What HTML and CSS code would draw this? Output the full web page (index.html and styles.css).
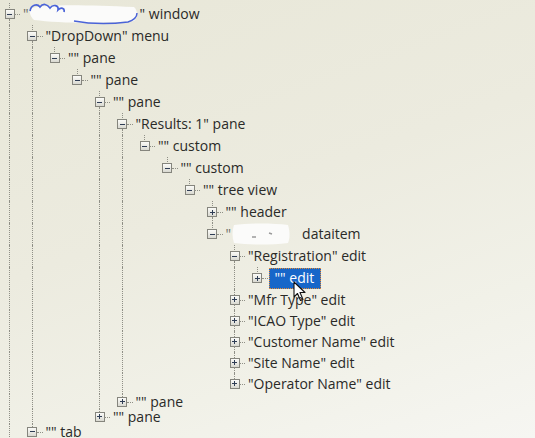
FILE: index.html
```html
<!DOCTYPE html>
<html lang="en">
<head>
<meta charset="utf-8">
<title>Tree</title>
<link rel="stylesheet" href="styles.css">
</head>
<body>
<div class="tree">
  <div class="row">
    <span class="n more"><i class="box minus"></i></span>
    <span class="label"><span class="q">"</span><svg class="redact r1" width="112" height="22" viewBox="0 0 112 22"><path d="M4 5 C20 1 60 2 106 4 C110 8 110 14 106 18 C70 21 30 20 6 17 C1 12 1 8 4 5 Z" fill="#fbfbfa"/><path d="M2 8 C3 2 9 0 12 4 C15 0 19 1 22 5 C25 1 31 2 30 7 C33 4 37 5 36 9" fill="none" stroke="#4a63d8" stroke-width="1.7"/><path d="M46 18 C62 21 84 21 100 19 C106 17 109 14 109 10" fill="none" stroke="#4a63d8" stroke-width="1.5"/></svg>" window</span>
  </div>
  <div class="row">
    <span class="g v"></span>
    <span class="n more"><i class="box minus"></i></span>
    <span class="label">"DropDown" menu</span>
  </div>
  <div class="row">
    <span class="g v"></span><span class="g v"></span>
    <span class="n"><i class="box minus"></i></span>
    <span class="label">"" pane</span>
  </div>
  <div class="row">
    <span class="g v"></span><span class="g v"></span><span class="g"></span>
    <span class="n"><i class="box minus"></i></span>
    <span class="label">"" pane</span>
  </div>
  <div class="row">
    <span class="g v"></span><span class="g v"></span><span class="g"></span><span class="g"></span>
    <span class="n more"><i class="box minus"></i></span>
    <span class="label">"" pane</span>
  </div>
  <div class="row">
    <span class="g v"></span><span class="g v"></span><span class="g"></span><span class="g"></span><span class="g v"></span>
    <span class="n more"><i class="box minus"></i></span>
    <span class="label">"Results: 1" pane</span>
  </div>
  <div class="row">
    <span class="g v"></span><span class="g v"></span><span class="g"></span><span class="g"></span><span class="g v"></span><span class="g v"></span>
    <span class="n"><i class="box minus"></i></span>
    <span class="label">"" custom</span>
  </div>
  <div class="row">
    <span class="g v"></span><span class="g v"></span><span class="g"></span><span class="g"></span><span class="g v"></span><span class="g v"></span><span class="g"></span>
    <span class="n"><i class="box minus"></i></span>
    <span class="label">"" custom</span>
  </div>
  <div class="row">
    <span class="g v"></span><span class="g v"></span><span class="g"></span><span class="g"></span><span class="g v"></span><span class="g v"></span><span class="g"></span><span class="g"></span>
    <span class="n"><i class="box minus"></i></span>
    <span class="label">"" tree view</span>
  </div>
  <div class="row">
    <span class="g v"></span><span class="g v"></span><span class="g"></span><span class="g"></span><span class="g v"></span><span class="g v"></span><span class="g"></span><span class="g"></span><span class="g"></span>
    <span class="n more"><i class="box plus"></i></span>
    <span class="label">"" header</span>
  </div>
  <div class="row">
    <span class="g v"></span><span class="g v"></span><span class="g"></span><span class="g"></span><span class="g v"></span><span class="g v"></span><span class="g"></span><span class="g"></span><span class="g"></span>
    <span class="n"><i class="box minus"></i></span>
    <span class="label"><span class="q">"</span><svg class="redact r2" width="60" height="22" viewBox="0 0 60 22"><path d="M3 2 C18 0 42 0 57 2 C59 9 59 15 57 20 C40 22 18 22 3 20 C1 14 1 8 3 2 Z" fill="#fbfbfa"/><path d="M21 14 L25 14 M38 10 L41 11" stroke="#9a9a9a" stroke-width="1.4"/></svg>dataitem</span>
  </div>
  <div class="row">
    <span class="g v"></span><span class="g v"></span><span class="g"></span><span class="g"></span><span class="g v"></span><span class="g v"></span><span class="g"></span><span class="g"></span><span class="g"></span><span class="g"></span>
    <span class="n more"><i class="box minus"></i></span>
    <span class="label">"Registration" edit</span>
  </div>
  <div class="row">
    <span class="g v"></span><span class="g v"></span><span class="g"></span><span class="g"></span><span class="g v"></span><span class="g v"></span><span class="g"></span><span class="g"></span><span class="g"></span><span class="g"></span><span class="g v"></span>
    <span class="n"><i class="box plus"></i></span>
    <span class="label"><span class="selected">"" edit<svg class="cursor" width="14" height="21" viewBox="0 0 14 21"><path d="M1 1 L1 16 L4.5 12.5 L7.5 19.5 L10 18.5 L7 11.5 L12 11.5 Z" fill="#ffffff" stroke="#111111" stroke-width="1.1" stroke-linejoin="round"/></svg></span></span>
  </div>
  <div class="row low">
    <span class="g v"></span><span class="g v"></span><span class="g"></span><span class="g"></span><span class="g v"></span><span class="g v"></span><span class="g"></span><span class="g"></span><span class="g"></span><span class="g"></span>
    <span class="n more"><i class="box plus"></i></span>
    <span class="label">"Mfr Type" edit</span>
  </div>
  <div class="row low">
    <span class="g v"></span><span class="g v"></span><span class="g"></span><span class="g"></span><span class="g v"></span><span class="g v"></span><span class="g"></span><span class="g"></span><span class="g"></span><span class="g"></span>
    <span class="n more"><i class="box plus"></i></span>
    <span class="label">"ICAO Type" edit</span>
  </div>
  <div class="row low">
    <span class="g v"></span><span class="g v"></span><span class="g"></span><span class="g"></span><span class="g v"></span><span class="g v"></span><span class="g"></span><span class="g"></span><span class="g"></span><span class="g"></span>
    <span class="n more"><i class="box plus"></i></span>
    <span class="label">"Customer Name" edit</span>
  </div>
  <div class="row low">
    <span class="g v"></span><span class="g v"></span><span class="g"></span><span class="g"></span><span class="g v"></span><span class="g v"></span><span class="g"></span><span class="g"></span><span class="g"></span><span class="g"></span>
    <span class="n more"><i class="box plus"></i></span>
    <span class="label">"Site Name" edit</span>
  </div>
  <div class="row low">
    <span class="g v"></span><span class="g v"></span><span class="g"></span><span class="g"></span><span class="g v"></span><span class="g v"></span><span class="g"></span><span class="g"></span><span class="g"></span><span class="g"></span>
    <span class="n"><i class="box plus"></i></span>
    <span class="label">"Operator Name" edit</span>
  </div>
  <div class="row tail">
    <span class="g v"></span><span class="g v"></span><span class="g"></span><span class="g"></span><span class="g v"></span>
    <span class="n"><i class="box plus"></i></span>
    <span class="label">"" pane</span>
  </div>
  <div class="row tail">
    <span class="g v"></span><span class="g v"></span><span class="g"></span><span class="g"></span>
    <span class="n"><i class="box plus"></i></span>
    <span class="label">"" pane</span>
  </div>
  <div class="row tail">
    <span class="g v"></span>
    <span class="n"><i class="box minus"></i></span>
    <span class="label">"" tab</span>
  </div>
</div>
</body>
</html>
```

FILE: styles.css
```css
html, body {
  margin: 0;
  height: 100%;
}
body {
  background: linear-gradient(160deg, #e8e7d8 0%, #ecebdf 45%, #f1f1e8 75%, #f6f6f2 100%);
  font-family: "Open Sans", "Noto Sans", sans-serif;
  font-size: 14px;
  color: #2a2a28;
  overflow: hidden;
}
.tree {
  padding-top: 3px;
  margin-left: -2px;
  display: flex;
  flex-direction: column;
}
.row {
  display: flex;
  flex: none;
  height: 22px;
  align-items: stretch;
}
.row.low {
  height: 21px;
}
.row.tail {
  height: 15px;
}
.row.tail .label {
  line-height: 15px;
}
.g, .n {
  flex: none;
  width: 22.5px;
  position: relative;
}
.g.v::before {
  content: "";
  position: absolute;
  left: 11px;
  top: 0;
  bottom: 0;
  border-left: 1px dotted #8f8f86;
}
.n::before {
  content: "";
  position: absolute;
  left: 11px;
  top: 0;
  height: calc(50% - 4.5px);
  border-left: 1px dotted #8f8f86;
}
.n.more::after {
  content: "";
  position: absolute;
  left: 11px;
  top: calc(50% + 4.5px);
  bottom: 0;
  border-left: 1px dotted #8f8f86;
}
.box {
  position: absolute;
  left: 6.5px;
  top: calc(50% - 5px);
  width: 8px;
  height: 8px;
  border: 1px solid #85857d;
  background: linear-gradient(180deg, #fbfbf8 0%, #d9d9d1 100%);
  box-sizing: content-box;
}
.box::before {
  content: "";
  position: absolute;
  left: 1.5px;
  top: 3.5px;
  width: 5px;
  height: 1.2px;
  background: #2f3d55;
}
.box.plus::after {
  content: "";
  position: absolute;
  left: 3.5px;
  top: 1.5px;
  width: 1.2px;
  height: 5px;
  background: #2f3d55;
}
.label {
  position: relative;
  display: flex;
  align-items: center;
  white-space: pre;
  padding-left: 2.5px;
  line-height: 16px;
}
.label::before {
  content: "";
  position: absolute;
  left: -6.5px;
  width: 6px;
  top: 50%;
  border-top: 1px dotted #8f8f86;
}
.q {
  color: #6c6c66;
}
.redact {
  display: block;
  flex: none;
}
.r1 {
  margin: -1px 0 0 -1px;
}
.r2 {
  margin: 0 11px 0 0;
  height: 22px;
}
.selected {
  position: relative;
  display: flex;
  align-items: center;
  height: 21px;
  margin-left: -2px;
  padding: 0 7px 0 6px;
  background: #1766c9;
  color: #ffffff;
  outline: 1px dotted #e48a34;
  outline-offset: -1px;
}
.cursor {
  position: absolute;
  left: 24px;
  top: 13px;
}
```
